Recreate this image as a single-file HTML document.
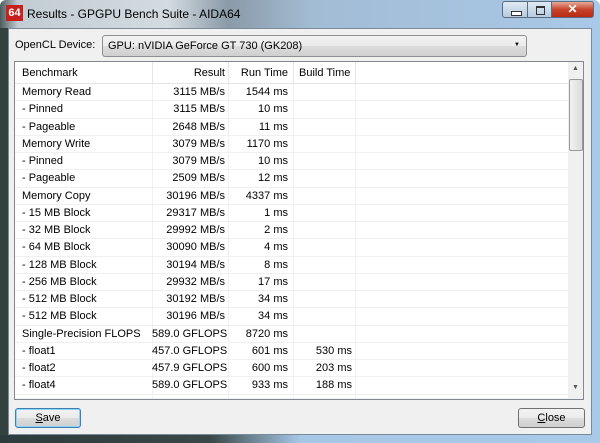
<html><head><style>
body{margin:0;width:600px;height:443px;overflow:hidden;font-family:"Liberation Sans",sans-serif;font-size:11px;color:#000}
.win{position:absolute;left:0;top:0;width:600px;height:443px;background:linear-gradient(90deg,#4d5c5e 0,#c2ccd3 3%,#d3dbe0 28%,#8a9aa8 38%,#a2bcd4 52%,#a9c9e8 100%);border-radius:6px 6px 0 0}
.bottom{position:absolute;left:0;top:435px;width:600px;height:8px;background:linear-gradient(90deg,#2c3b3b 0,#3a4848 35%,#a7c7e6 50%,#a9c9e8 100%)}
.lframe{position:absolute;left:0;top:28px;width:8px;height:410px;background:#33423f}
.rframe{position:absolute;left:592px;top:28px;width:8px;height:410px;background:#a9c9e8}
.client{position:absolute;left:8px;top:28px;width:584px;height:407px;background:#f0f0f0;border:1px solid #7a8a99;box-sizing:border-box}
.icon{position:absolute;left:6px;top:5px;width:17px;height:16px;background:#c8201c;color:#fff;font-weight:bold;font-size:11px;line-height:16px;text-align:center}
.title{position:absolute;left:27px;top:7px;font-size:12px;color:#000}
.ctl{position:absolute;top:1px;height:17px;border:1px solid #5a6d80;box-sizing:border-box}
.row{position:absolute;left:15px;width:553px;border-bottom:1px solid #f0f0f0;box-sizing:border-box}
.c{position:absolute;top:0;line-height:16px;white-space:nowrap}
.btn{position:absolute;top:408px;height:20px;border:1px solid #707070;border-radius:3px;background:linear-gradient(#f2f2f2,#ebebeb 50%,#dddddd 50%,#cfcfcf);text-align:center;line-height:18px;box-sizing:border-box}
</style></head><body>
<div class="win"></div>
<div class="lframe"></div><div class="rframe"></div><div class="bottom"></div>
<div class="icon">64</div>
<div class="title">Results - GPGPU Bench Suite - AIDA64</div>
<div class="ctl" style="left:502px;width:26px;border-radius:3px 0 0 3px;background:linear-gradient(#dfe9f3,#b7cbe0)"><div style="position:absolute;left:8px;top:9px;width:9px;height:3px;border:1px solid #333;background:#fff"></div></div>
<div class="ctl" style="left:527px;width:25px;background:linear-gradient(#dfe9f3,#b7cbe0)"><div style="position:absolute;left:8px;top:4px;width:7px;height:6px;border:1px solid #333;border-top-width:2px"></div></div>
<div class="ctl" style="left:551px;width:43px;border-radius:0 3px 3px 0;background:linear-gradient(#e8a99a,#c7432b 50%,#b62a12);color:#fff;text-align:center;font-weight:bold;font-size:12px;line-height:14px">✕</div>
<div class="client"></div>
<div style="position:absolute;left:15px;top:39px;font-size:11px">OpenCL Device:</div>
<div style="position:absolute;left:102px;top:35px;width:425px;height:22px;border:1px solid #8e8f8f;border-radius:3px;box-sizing:border-box;background:linear-gradient(#f2f2f2,#ebebeb 50%,#dddddd 50%,#cfcfcf)"><span style="position:absolute;left:5px;top:4px">GPU: nVIDIA GeForce GT 730 (GK208)</span><span style="position:absolute;right:6px;top:6px;font-size:6px">▼</span></div>
<div style="position:absolute;left:14px;top:61px;width:570px;height:339px;border:1px solid #828790;background:#fff;box-sizing:border-box;overflow:hidden">
<div style="position:absolute;left:0;top:0;width:553px;height:21px;border-bottom:1px solid #e5e5e5;background:#fff">
<div class="c" style="left:7px;top:3px">Benchmark</div>
<div class="c" style="left:137px;top:0;height:21px;border-left:1px solid #e5e5e5"></div>
<div class="c" style="left:137px;width:73px;text-align:right;top:3px">Result</div>
<div class="c" style="left:213px;top:0;height:21px;border-left:1px solid #e5e5e5"></div>
<div class="c" style="left:213px;width:60px;text-align:right;top:3px">Run Time</div>
<div class="c" style="left:278px;top:0;height:21px;border-left:1px solid #e5e5e5"></div>
<div class="c" style="left:284px;top:3px">Build Time</div>
<div class="c" style="left:340px;top:0;height:21px;border-left:1px solid #e5e5e5"></div>
</div>
<div style="position:absolute;left:553px;top:0;width:15px;height:337px;background:#f0f0f0">
<div style="position:absolute;left:0;top:3px;width:15px;text-align:center;font-size:7px;color:#555">▲</div>
<div style="position:absolute;left:1px;top:17px;width:12px;height:70px;border:1px solid #999;border-radius:2px;background:linear-gradient(90deg,#f2f2f2,#dcdcdc)"></div>
<div style="position:absolute;left:0;top:322px;width:15px;text-align:center;font-size:7px;color:#555">▼</div>
</div>
</div>
<div id="rows"></div>
<script>
var d=[["Memory Read","3115 MB/s","1544 ms",""],["- Pinned","3115 MB/s","10 ms",""],["- Pageable","2648 MB/s","11 ms",""],["Memory Write","3079 MB/s","1170 ms",""],["- Pinned","3079 MB/s","10 ms",""],["- Pageable","2509 MB/s","12 ms",""],["Memory Copy","30196 MB/s","4337 ms",""],["- 15 MB Block","29317 MB/s","1 ms",""],["- 32 MB Block","29992 MB/s","2 ms",""],["- 64 MB Block","30090 MB/s","4 ms",""],["- 128 MB Block","30194 MB/s","8 ms",""],["- 256 MB Block","29932 MB/s","17 ms",""],["- 512 MB Block","30192 MB/s","34 ms",""],["- 512 MB Block","30196 MB/s","34 ms",""],["Single-Precision FLOPS","589.0 GFLOPS","8720 ms",""],["- float1","457.0 GFLOPS","601 ms","530 ms"],["- float2","457.9 GFLOPS","600 ms","203 ms"],["- float4","589.0 GFLOPS","933 ms","188 ms"],["- float8","573.0 GFLOPS","840 ms","187 ms"]];
var h="";d.forEach(function(r,i){var t=Math.round(84+i*17.25);var n=Math.round(84+(i+1)*17.25);var hh=Math.min(n-t,399-t);if(hh<=0)return;
h+='<div class="row" style="top:'+t+'px;height:'+hh+'px;overflow:hidden"><div class="c" style="left:7px">'+r[0]+'</div><div class="c" style="left:137px;height:18px;border-left:1px solid #f0f0f0"></div><div class="c" style="left:137px;width:73px;text-align:right">'+r[1]+'</div><div class="c" style="left:213px;height:18px;border-left:1px solid #f0f0f0"></div><div class="c" style="left:213px;width:60px;text-align:right">'+r[2]+'</div><div class="c" style="left:278px;height:18px;border-left:1px solid #f0f0f0"></div><div class="c" style="left:278px;width:59px;text-align:right">'+r[3]+'</div><div class="c" style="left:340px;height:18px;border-left:1px solid #f0f0f0"></div></div>';});
document.getElementById("rows").innerHTML=h;
</script>
<div class="btn" style="left:15px;width:66px;border-color:#3c7fb1;box-shadow:inset 0 0 0 1px #8ed3f6"><u>S</u>ave</div>
<div class="btn" style="left:518px;width:67px"><u>C</u>lose</div>
</body></html>
